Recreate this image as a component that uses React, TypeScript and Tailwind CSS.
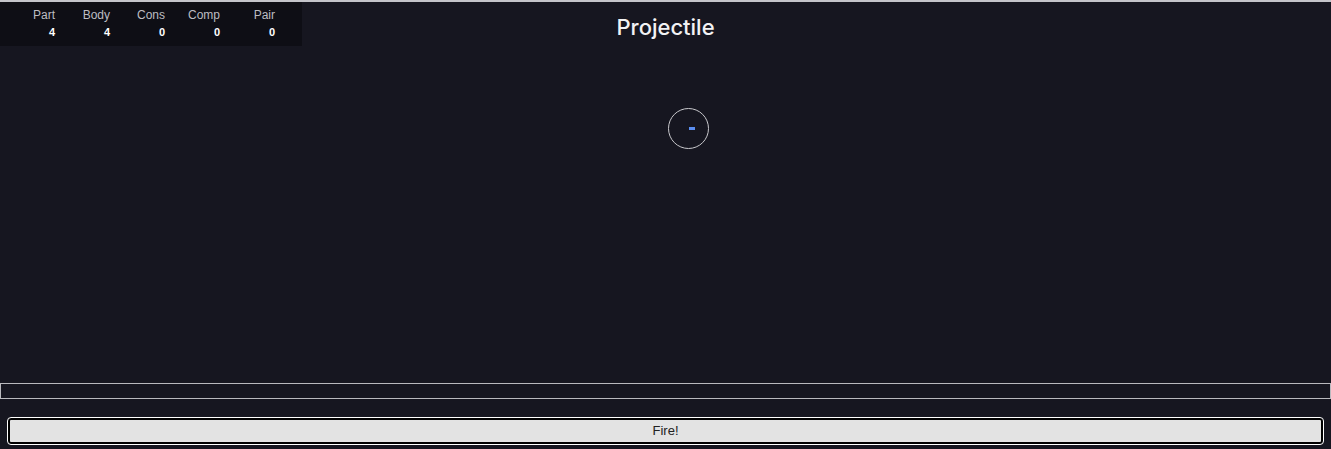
const stats = [
  { label: 'Part', value: 4 },
  { label: 'Body', value: 4 },
  { label: 'Cons', value: 0 },
  { label: 'Comp', value: 0 },
  { label: 'Pair', value: 0 },
];

function StatsPanel() {
  return (
    <div className="absolute left-0 top-0 w-[302px] h-[44px] bg-[#0e0e15] pt-[5px] font-['Liberation_Sans',Arial,sans-serif]">
      <div className="grid grid-cols-[repeat(5,55px)] text-right">
        {stats.map((s) => (
          <div key={s.label} className="text-[12px] leading-[16px] text-[#bdbdc2]">
            {s.label}
          </div>
        ))}
        {stats.map((s) => (
          <div key={s.label + 'v'} className="text-[11px] leading-[18px] font-bold text-white">
            {s.value}
          </div>
        ))}
      </div>
    </div>
  );
}

export default function App() {
  return (
    <div className="w-[1331px] h-[449px] bg-[#161620] border-t-2 border-[#c4c4ca] flex flex-col overflow-hidden">
      <div className="relative h-[381px] shrink-0">
        <StatsPanel />
        <h1 className="pt-[11px] text-center text-[22px] leading-[28px] font-medium text-[#f2f2f4] font-['Inter','Open_Sans',sans-serif]">
          Projectile
        </h1>
        {/* projectile */}
        <div className="absolute left-[668px] top-[106px] w-[41px] h-[41px] rounded-full border border-[#c8c8cc] flex items-center justify-center">
          <div className="w-[6px] h-[3px] bg-[#5b8ef0] ml-[6px]" />
        </div>
      </div>
      <div className="h-[16px] border border-[#b9b9be] shrink-0" />
      <div className="px-[8px] pt-[18px]">
        <button className="w-full h-[26px] bg-[#e3e3e3] border-2 border-black rounded-[3px] outline outline-1 outline-white text-[13px] text-[#222] font-['Liberation_Sans',Arial,sans-serif]">
          Fire!
        </button>
      </div>
    </div>
  );
}
